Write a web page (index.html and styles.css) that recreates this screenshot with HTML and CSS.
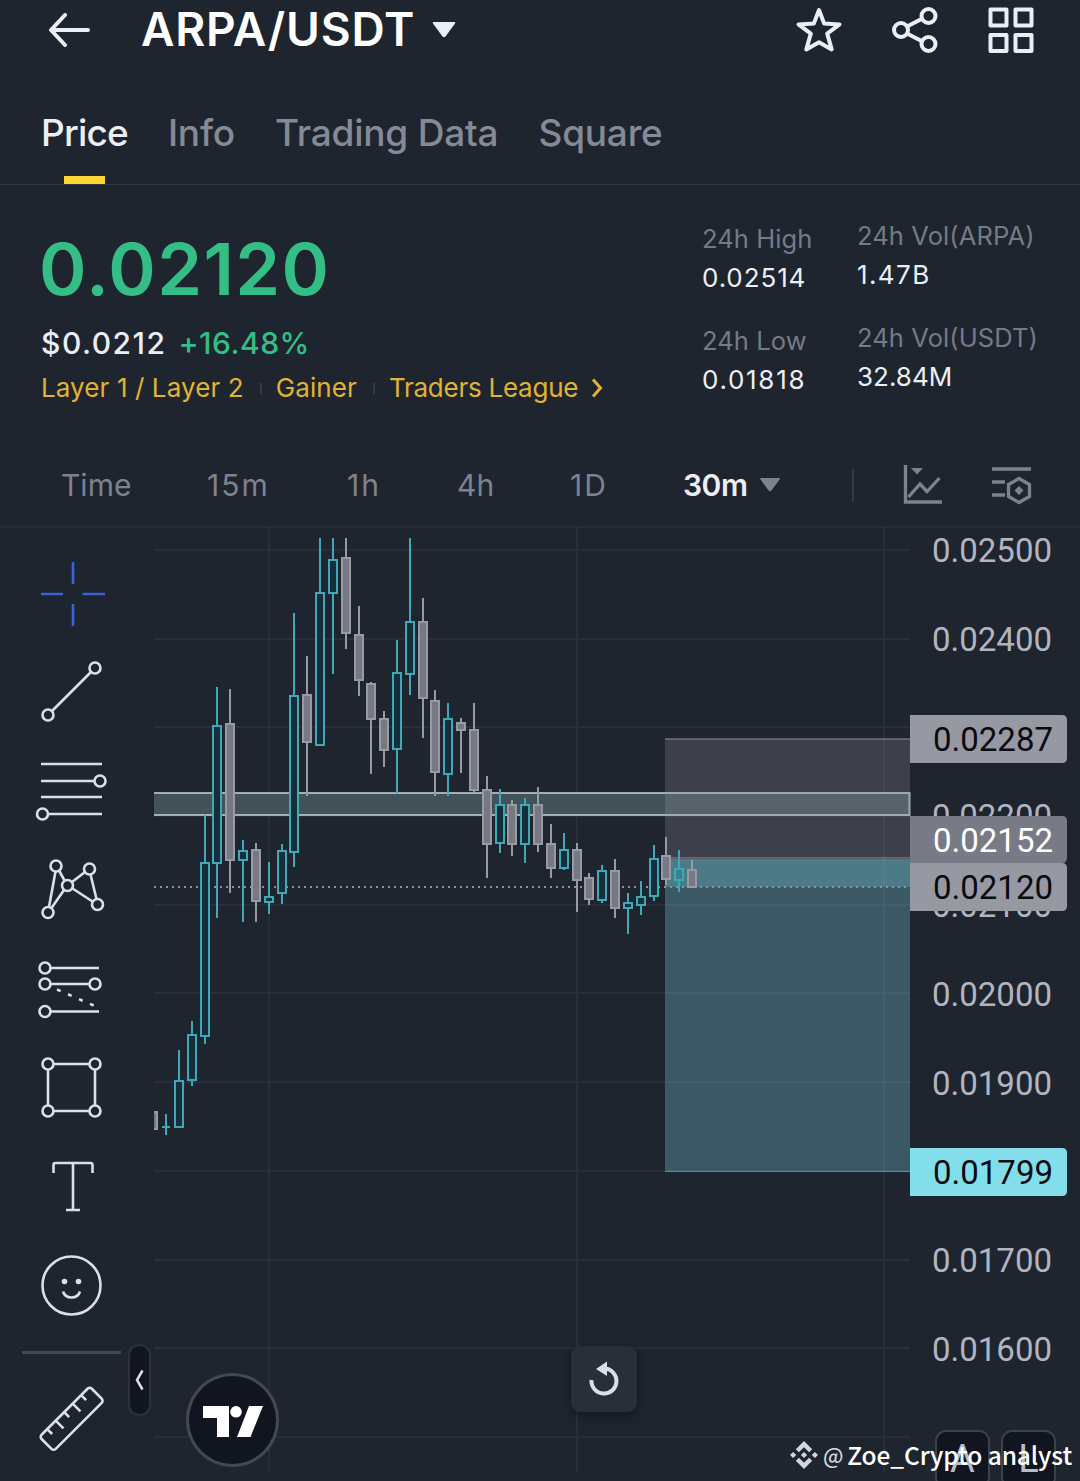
FILE: index.html
```html
<!DOCTYPE html>
<html lang="en">
<head>
    <meta charset="UTF-8">
    <meta name="viewport" content="width=device-width, initial-scale=1.0">
    <title>ARPA/USDT</title>
    <link rel="stylesheet" href="styles.css">
</head>
<body>
    <header class="topbar">
        <svg class="back" width="42" height="34" viewBox="0 0 42 34"><path d="M16 2L2 17l14 15M3 17h36"/></svg>
        <h1>ARPA/USDT</h1>
        <svg class="caret" width="24" height="16" viewBox="0 0 24 16"><path d="M1.500 0h21q1.500 0 .5 1.500L13.500 14.500q-1.500 1.500-3 0L1 1.500q-1-1.500.5-1.500z"/></svg>
        <div class="actions">
            <svg width="48" height="48" viewBox="0 0 48 48"><path d="M24 4l5.200 13.600 15.300.8-12.300 9.200 4.500 15.800L24 36.200l-12.700 7.200 4.500-15.800L3.500 18.400l15.300-.8z"/></svg>
            <svg width="48" height="48" viewBox="0 0 48 48"><circle cx="10" cy="24" r="7"/><circle cx="37.500" cy="10" r="7"/><circle cx="37.500" cy="38" r="7"/><path d="M16 20.500l15.500-8M16 27.500l15.500 8"/></svg>
            <svg width="48" height="48" viewBox="0 0 48 48"><path d="M3.500 3.500h16v16h-16zM28.500 3.500h16v16h-16zM3.500 29h16v16h-16zM28.500 29h16v16h-16z"/></svg>
        </div>
    </header>

    <nav class="tabs">
        <a class="active">Price</a>
        <a>Info</a>
        <a>Trading Data</a>
        <a>Square</a>
    </nav>

    <section class="summary">
        <div class="price-box">
            <div class="price">0.02120</div>
            <div class="change"><span class="usd">$0.0212</span><span class="percent">+16.48%</span></div>
            <div class="tags">
                <span>Layer 1 / Layer 2</span>
                <i></i>
                <span>Gainer</span>
                <i></i>
                <span class="league">Traders League</span>
                <svg width="12" height="20" viewBox="0 0 12 20"><path d="M2 1.500l7.500 8.500L2 18.500"/></svg>
            </div>
        </div>
        <div class="stats">
            <div class="stat"><label>24h High</label><b>0.02514</b></div>
            <div class="stat"><label>24h Low</label><b class="low">0.01818</b></div>
        </div>
        <div class="stats volume">
            <div class="stat"><label>24h Vol(ARPA)</label><b class="base">1.47B</b></div>
            <div class="stat"><label>24h Vol(USDT)</label><b class="quote">32.84M</b></div>
        </div>
    </section>

    <div class="intervals">
        <span>Time</span>
        <span class="wide">15m</span>
        <span class="wide">1h</span>
        <span>4h</span>
        <span class="wide">1D</span>
        <span class="selected">30m <svg width="20" height="14" viewBox="0 0 20 14"><path d="M1 0h18q1.500 0 .5 1.500l-8 11q-1.500 1.500-3 0l-8-11Q-.5 0 1 0z"/></svg></span>
        <i></i>
        <svg width="40" height="40" viewBox="0 0 40 40">
            <path class="line" d="M2.500 0v37H39M5.500 32L17 19l7 7.500L36.500 13"/>
            <path class="solid" d="M8 3h12l-6 6.500z"/>
        </svg>
        <svg width="40" height="40" viewBox="0 0 40 40">
            <path class="line" d="M0 4h39M0 17h13M0 30h13M27 13.500l10.500 6v12L27 37.500l-10.500-6v-12z"/>
            <path class="solid" d="M27 21l4.500 4.500L27 30l-4.500-4.500z"/>
        </svg>
    </div>

    <main class="chart">
        <aside class="tools">
            <svg class="cross" viewBox="0 0 84 84"><path d="M43 10v22M43 52v22M11 42h22M52.500 42H75"/></svg>
            <svg viewBox="0 0 84 84"><path d="M22 60l39-39"/><circle cx="18" cy="64" r="5.500"/><circle cx="65" cy="17" r="5.500"/></svg>
            <svg viewBox="0 0 84 84"><path d="M11 14h61M11 31h53M11 47h61M18 64h54"/><circle cx="70" cy="31" r="5.500"/><circle cx="12.500" cy="64" r="5.500"/></svg>
            <svg viewBox="0 0 84 84"><path d="M25.500 22.500L19 58M29 21.500l5.500 10M34 41L21.500 59M42 33l13-10M42.500 39.500l20 13M60.500 25.500l6 24.500"/><circle cx="26" cy="17" r="5.500"/><circle cx="59.500" cy="20" r="5.500"/><circle cx="37.500" cy="36.500" r="5.500"/><circle cx="67.500" cy="55.500" r="5.500"/><circle cx="18" cy="63.500" r="5.500"/></svg>
            <svg viewBox="0 0 84 84"><path d="M20.500 20H69M20.500 36h39M20.500 63.500H69"/><path d="M27 41.500L66 58.500" stroke-dasharray="4 8"/><circle cx="15" cy="20" r="5.500"/><circle cx="15" cy="36" r="5.500"/><circle cx="65" cy="36" r="5.500"/><circle cx="15" cy="63.500" r="5.500"/></svg>
            <svg viewBox="0 0 84 84"><path d="M23.500 17h36M23.500 64h36M18 22.500v36M65 22.500v36"/><circle cx="18" cy="17" r="5.500"/><circle cx="65" cy="17" r="5.500"/><circle cx="18" cy="64" r="5.500"/><circle cx="65" cy="64" r="5.500"/></svg>
            <svg viewBox="0 0 84 84"><path d="M23.500 27v-8q0-2 2-2h35q2 0 2 2v8M43 17v47M36 64h14"/></svg>
            <svg viewBox="0 0 84 84"><circle cx="41.500" cy="40.500" r="29"/><path d="M33 46.500c2.500 8 14.500 8 17 0"/><circle class="eye" cx="34.500" cy="36.500" r="2.800"/><circle class="eye" cx="48.500" cy="36.500" r="2.800"/></svg>
            <hr>
            <svg viewBox="0 0 84 84"><g transform="translate(9.600 60) rotate(-45) translate(0 -.2)"><rect width="71" height="20" rx="3"/><path d="M11 0v7M23 0v11M35 0v7M47 0v11M59 0v7"/></g></svg>
        </aside>

        <svg class="plot" width="926" height="954" viewBox="154 527 926 954">
            <path class="grid" d="M154 550h756M154 639h756M154 727h756M154 816h756M154 905h756M154 993h756M154 1082h756M154 1171h756M154 1260h756M154 1348h756M154 1437h756M269 527v945M577 527v945M884 527v945"/>
            <rect class="zone" x="150" y="793" width="759" height="22"/>
            <path class="zone-line" d="M154 793h755.500v22H154"/>
            <rect class="stop" x="665" y="739" width="245" height="119"/>
            <path class="stop-line" d="M665 739h245M665 858h245"/>
            <rect class="target" x="665" y="859" width="245" height="313"/>
            <rect class="target-hit" x="665" y="859" width="245" height="28"/>
            <path class="target-line" d="M665 1171.500h245"/>
            <path class="last" d="M154 887h756"/>
            <g id="candles"></g>
            <g class="axis" id="axis"></g>
            <path class="tag" d="M910 715h152q5 0 5 5v38q0 5-5 5H910z"/>
            <path class="tag entry" d="M910 816h152q5 0 5 5v37q0 5-5 5H910z"/>
            <path class="tag" d="M910 863h152q5 0 5 5v38q0 5-5 5H910z"/>
            <path class="tag goal" d="M910 1148h152q5 0 5 5v38q0 5-5 5H910z"/>
            <g class="tag-text">
                <text x="933" y="751">0.02287</text>
                <text class="light" x="933" y="852">0.02152</text>
                <text x="933" y="899">0.02120</text>
                <text x="933" y="1184">0.01799</text>
            </g>
        </svg>

        <div class="collapse"><svg width="9" height="22" viewBox="0 0 9 22"><path d="M7.500 1.500L2 11l5.500 9.500"/></svg></div>
        <div class="tv"><svg width="60" height="32" viewBox="0 0 60 32"><path d="M0 0h26v31H14V12H0zM46 0h14L47.500 31H34z"/><circle cx="33" cy="5.800" r="5.800"/></svg></div>
        <div class="reset"><svg width="32" height="36" viewBox="0 0 32 36"><path class="arc" d="M3.500 19a12.500 12.500 0 1 0 12.500-11.500h-1"/><path class="head" d="M8 8L19 .5V15z"/></svg></div>
        <div class="scale auto">A</div>
        <div class="scale log">L</div>
        <div class="watermark">
            <svg width="28" height="28" viewBox="0 0 28 28"><path d="M14 0l8.200 8.200-3.100 3.100L14 6.200l-5.100 5.100-3.100-3.100zM3.100 10.900L6.200 14l-3.100 3.100L0 14zM24.900 10.900L28 14l-3.100 3.100-3.100-3.100zM14 10.900l3.100 3.100-3.100 3.100-3.100-3.100zM14 28l-8.200-8.200 3.100-3.100 5.100 5.100 5.100-5.100 3.100 3.100z"/></svg>
            <span class="at">@</span>
            <span>Zoe_Crypto analyst</span>
        </div>
    </main>
    <script src="chart.js"></script>
</body>
</html>
```
FILE: styles.css
```css
body {
    margin: 0;
    width: 1080px;
    height: 1481px;
    overflow: hidden;
    background-color: #1f252f;
    color: #eceef5;
    font-family: Inter, "Liberation Sans", sans-serif;
}

svg {
    display: block;
    flex: none;
}

.topbar {
    display: flex;
    align-items: center;
    height: 59px;
    padding: 0 45px 0 49px;
}

h1 {
    margin: 0 17px 0 50px;
    font-size: 46px;
    font-weight: 600;
    line-height: 57px;
    letter-spacing: 0.8px;
    color: #fff;
}

.back path {
    fill: none;
    stroke: #eceef5;
    stroke-width: 4;
    stroke-linecap: round;
    stroke-linejoin: round;
}

.caret {
    fill: #eceef5;
}

.actions {
    display: flex;
    gap: 48px;
    margin-left: auto;
    fill: none;
    stroke: #eceef5;
    stroke-width: 4;
    stroke-linejoin: round;
}

.tabs {
    display: flex;
    gap: 40px;
    height: 125px;
    padding-left: 41px;
    border-bottom: 1px solid #30363f;
    font-size: 37px;
    font-weight: 500;
    line-height: 147px;
    letter-spacing: -0.2px;
    color: #848b97;
}

.tabs .active {
    color: #eceef5;
    background: linear-gradient(#fcd535, #fcd535) 23px bottom / 41px 8px no-repeat;
    letter-spacing: -0.8px;
}

.summary {
    display: flex;
    height: 259px;
}

.price-box {
    box-sizing: border-box;
    width: 702px;
    padding: 48px 0 0 41px;
}

.price {
    margin-left: -2px;
    font-size: 72px;
    font-weight: 600;
    line-height: 72px;
    letter-spacing: 1.4px;
    color: #34be86;
}

.change {
    margin-top: 20px;
    font-size: 30px;
    font-weight: 500;
    line-height: 36px;
}

.usd {
    letter-spacing: 1.5px;
}

.percent {
    margin-left: 12px;
    letter-spacing: 0.5px;
    color: #34be86;
}

.tags {
    display: flex;
    align-items: center;
    margin-top: 9px;
    font-size: 26px;
    line-height: 36px;
    letter-spacing: 0.1px;
    color: #e0b334;
}

.tags i {
    width: 2px;
    height: 11px;
    margin: 0 14px 0 16px;
    background-color: #353b45;
}

.tags .league {
    margin-right: 13px;
    letter-spacing: -0.25px;
}

.tags svg {
    fill: none;
    stroke: #e0b334;
    stroke-width: 3;
}

.stats {
    display: flex;
    flex-direction: column;
    gap: 22px;
    width: 155px;
    padding-top: 34px;
    white-space: nowrap;
}

.stats.volume {
    padding-top: 31px;
}

.stat label,
.stat b {
    display: block;
    height: 40px;
    line-height: 40px;
}

.stat label {
    font-size: 25.500px;
    letter-spacing: 0.1px;
    color: #747b87;
}

.stat b {
    margin-top: -1px;
    height: 41px;
    font-size: 26px;
    font-weight: 400;
    letter-spacing: 0.9px;
}

.stat .low {
    letter-spacing: 1.7px;
}

.stat .base {
    letter-spacing: 1.4px;
}

.stat .quote {
    letter-spacing: 0;
}

.intervals {
    display: grid;
    grid-template-columns: 146px 140px 110px 113px 113px 169px 51px 89px 40px;
    align-items: center;
    height: 82px;
    padding-left: 61px;
    border-bottom: 2px solid #262c36;
    font-size: 30px;
    color: #7c838f;
}

.intervals .wide {
    letter-spacing: 2px;
}

.intervals .selected {
    display: flex;
    align-items: center;
    gap: 13px;
    font-weight: 600;
    letter-spacing: -0.5px;
    color: #eceef5;
}

.intervals i {
    width: 2px;
    height: 33px;
    background-color: #353b45;
}

.selected svg,
.intervals .solid {
    fill: #7c838f;
}

.intervals .line {
    fill: none;
    stroke: #7c838f;
    stroke-width: 3.300;
}

.chart {
    position: relative;
    display: flex;
    height: 954px;
    margin-top: -1px;
}

/* drawing tools on the left */
.tools {
    display: flex;
    flex-direction: column;
    gap: 15px;
    width: 124px;
    padding: 25px 0 0 30px;
    fill: none;
    stroke: #dcdee8;
    stroke-width: 2.600;
}

.tools svg {
    width: 84px;
    height: 84px;
}

.tools .cross {
    stroke: #3a62d8;
}

.tools .eye {
    fill: #dcdee8;
    stroke: none;
}

.tools hr {
    width: 99px;
    height: 3px;
    margin: 7px 0 8px -8px;
    border: none;
    background-color: #444852;
}

.grid {
    fill: none;
    stroke: #292f39;
    stroke-width: 2;
}

.zone {
    fill: #41525b;
}

.zone-line {
    fill: none;
    stroke: #c5cbd2;
    stroke-opacity: 0.8;
    stroke-width: 2;
}

.up {
    fill: #142f39;
    stroke: #3fa7b8;
    stroke-width: 2;
}

.up.inside {
    fill: #3c7f8b;
    stroke: #38abbb;
}

.down {
    fill: #767883;
    stroke: #9799a4;
    stroke-width: 2;
}

.last {
    stroke: #8f929c;
    stroke-width: 2;
    stroke-dasharray: 2 4;
}

.stop {
    fill: #96929e;
    fill-opacity: 0.25;
}

.stop-line {
    stroke: #96929e;
    stroke-opacity: 0.5;
    stroke-width: 2;
}

.target {
    fill: #7dd2e4;
    fill-opacity: 0.3;
}

.target-hit {
    fill: #73c9d5;
    fill-opacity: 0.3;
}

.target-line {
    stroke: #5d8a95;
}

.axis,
.tag-text {
    font-family: Roboto, sans-serif;
    font-size: 33px;
}

.axis {
    fill: #b2b5c0;
}

.tag {
    fill: #9698a2;
}

.tag.entry {
    fill: #787a86;
}

.tag.goal {
    fill: #82deea;
}

.tag-text {
    fill: #0a0b10;
}

.tag-text .light {
    fill: #fff;
}

/* floating controls over the plot */
.collapse,
.tv,
.reset,
.scale {
    position: absolute;
    display: flex;
    align-items: center;
    justify-content: center;
    box-sizing: border-box;
}

.collapse {
    left: 128px;
    top: 817px;
    width: 23px;
    height: 72px;
    border: 2px solid #2b303a;
    border-radius: 12px;
    background-color: #11151f;
}

.collapse path {
    fill: none;
    stroke: #dcdee8;
    stroke-width: 2.500;
}

.tv {
    left: 186px;
    top: 846px;
    width: 93px;
    height: 94px;
    border: 3px solid #444852;
    border-radius: 50%;
    background-color: #11151f;
    fill: #fff;
}

.tv svg {
    margin-top: 3px;
}

.reset {
    left: 571px;
    top: 819px;
    width: 66px;
    height: 66px;
    border-radius: 9px;
    background-color: #282f38;
    box-shadow: 0 4px 8px rgba(0, 0, 0, 0.4);
}

.reset .arc {
    fill: none;
    stroke: #dcdee8;
    stroke-width: 4;
}

.reset .head {
    fill: #dcdee8;
}

.scale {
    top: 903px;
    width: 55px;
    height: 58px;
    border: 2px solid #3d414c;
    border-radius: 11px;
    background-color: #11151f;
    font-family: Roboto, sans-serif;
    font-size: 38px;
    color: #b8bcca;
}

.auto {
    left: 935px;
}

.log {
    left: 1001px;
}

.watermark {
    position: absolute;
    right: 8px;
    top: 908px;
    display: flex;
    align-items: center;
    height: 40px;
    font-family: "Noto Sans CJK SC", sans-serif;
    font-size: 24.500px;
    font-weight: 500;
    line-height: 40px;
    letter-spacing: -0.1px;
    white-space: nowrap;
    color: #fff;
}

.watermark svg {
    margin-right: 5px;
    fill: #d3d6de;
}

.watermark .at {
    margin-right: 4px;
    font-size: 21px;
    color: #d3d6de;
}
```
FILE: chart.js
```js
// center x, high, body top, body bottom, low, rising
var candles = [
    [166, 1114, 1127, 1127, 1135, 1],
    [179, 1050, 1081, 1127, 1128, 1],
    [192, 1021, 1035, 1080, 1086, 1],
    [205, 815, 863, 1036, 1044, 1],
    [217, 687, 726, 863, 918, 1],
    [230, 689, 724, 860, 893, 0],
    [243, 840, 851, 860, 922, 1],
    [256, 843, 850, 901, 922, 0],
    [269, 862, 897, 902, 914, 1],
    [282, 844, 851, 893, 904, 1],
    [294, 613, 696, 852, 867, 1],
    [307, 656, 695, 742, 796, 0],
    [320, 538, 593, 745, 745, 1],
    [333, 538, 560, 593, 674, 1],
    [346, 538, 558, 633, 649, 0],
    [359, 606, 635, 680, 696, 0],
    [371, 682, 684, 719, 774, 0],
    [384, 711, 719, 750, 767, 0],
    [397, 640, 673, 749, 793, 1],
    [410, 538, 622, 674, 695, 1],
    [423, 598, 622, 698, 738, 0],
    [435, 690, 701, 772, 796, 0],
    [448, 703, 719, 774, 796, 1],
    [461, 718, 723, 730, 773, 0],
    [474, 703, 730, 790, 793, 0],
    [487, 776, 790, 844, 878, 0],
    [500, 789, 805, 843, 853, 1],
    [512, 800, 805, 844, 856, 0],
    [525, 798, 805, 844, 863, 1],
    [538, 787, 805, 844, 852, 0],
    [551, 824, 844, 868, 878, 0],
    [564, 833, 850, 868, 870, 1],
    [577, 843, 850, 880, 912, 0],
    [589, 873, 878, 899, 905, 0],
    [602, 865, 871, 900, 903, 1],
    [615, 859, 871, 908, 918, 0],
    [628, 893, 903, 908, 934, 1],
    [641, 881, 897, 905, 915, 1],
    [654, 845, 859, 896, 901, 1],
    [666, 837, 856, 879, 885, 0],
    [679, 850, 869, 880, 892, 1],
    [692, 860, 870, 887, 887, 0]
];

var d = '<path class="down" d="M154 1112h3v17h-3"/>';
candles.forEach(function (c) {
    var x = c[0];
    var cls = c[5] ? 'up' : 'down';
    // candles over the position box are tinted by it
    if (x > 670) cls += ' inside';
    d += '<path class="' + cls + '" d="M' + x + ' ' + c[1] + 'V' + c[2] +
        'M' + x + ' ' + c[3] + 'V' + c[4] +
        'M' + (x - 4) + ' ' + c[2] + 'H' + (x + 4) + 'V' + c[3] + 'H' + (x - 4) + 'Z"/>';
});
document.getElementById('candles').innerHTML = d;

var labels = '';
for (var i = 0; i < 10; i++) {
    // 0.01800 is hidden by the target price tag
    if (i === 7) continue;
    labels += '<text x="932" y="' + (562 + i * 88.8) + '">' + (0.025 - i * 0.001).toFixed(5) + '</text>';
}
document.getElementById('axis').innerHTML = labels;
```
